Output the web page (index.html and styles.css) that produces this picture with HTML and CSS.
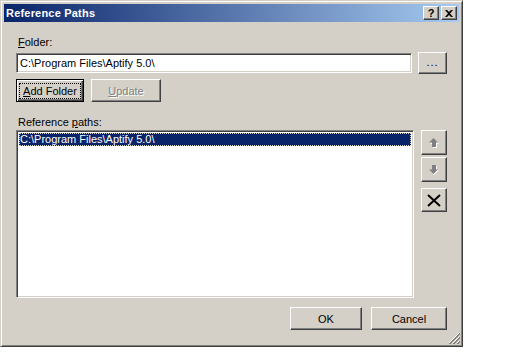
FILE: index.html
```html
<!DOCTYPE html>
<html lang="en">
<head>
    <meta charset="utf-8">
    <title>Reference Paths</title>
    <link rel="stylesheet" href="styles.css">
</head>
<body>
    <div class="dialog">
        <div class="titlebar">
            <span class="title">Reference Paths</span>
            <div class="title-buttons">
                <button class="cap-btn">?</button>
                <button class="cap-btn">
                    <svg width="8" height="7" viewBox="0 0 8 7"><path d="M0 0h2l2 2 2-2h2L5 3.5 8 7H6L4 5 2 7H0l3-3.5z" fill="#000"/></svg>
                </button>
            </div>
        </div>

        <div class="content">
            <div class="label"><u>F</u>older:</div>
            <div class="folder-row">
                <div class="textbox">C:\Program Files\Aptify 5.0\</div>
                <button class="btn browse-btn">...</button>
            </div>

            <div class="action-row">
                <button class="btn default-btn"><span class="focus"><u>A</u>dd Folder</span></button>
                <button class="btn disabled-btn"><u>U</u>pdate</button>
            </div>

            <div class="label paths-label">Reference <u>p</u>aths:</div>
            <div class="list-row">
                <div class="listbox">
                    <div class="list-item selected">C:\Program Files\Aptify 5.0\</div>
                </div>
                <div class="side-buttons">
                    <button class="btn side-btn">
                        <svg width="10" height="10" viewBox="0 0 10 10">
                            <path d="M5 1l5 5H8v4H4V6H1z" fill="#fff"/>
                            <path d="M4.5 0l4.5 4.5H7V9H3V4.5H0z" fill="#808080"/>
                        </svg>
                    </button>
                    <button class="btn side-btn">
                        <svg width="10" height="10" viewBox="0 0 10 10">
                            <path d="M5 10l5-5H8V1H4v4H1z" fill="#fff"/>
                            <path d="M4.5 9L9 4.5H7V0H3v4.5H0z" fill="#808080"/>
                        </svg>
                    </button>
                    <button class="btn side-btn delete-btn">
                        <svg width="14" height="13" viewBox="0 0 14 13">
                            <path d="M1 1l12 11M13 1L1 12" stroke="#000" stroke-width="2"/>
                        </svg>
                    </button>
                </div>
            </div>

            <div class="footer-row">
                <button class="btn ok-btn">OK</button>
                <button class="btn cancel-btn">Cancel</button>
            </div>
        </div>

        <svg class="grip" width="12" height="12" viewBox="0 0 12 12">
            <path d="M11 1L1 11M11 5L5 11M11 9L9 11" stroke="#fff" stroke-width="1"/>
            <path d="M12 1L1 12M12 2L2 12M12 5L5 12M12 6L6 12M12 9L9 12M12 10L10 12" stroke="#808080" stroke-width="1"/>
        </svg>
    </div>
</body>
</html>
```

FILE: styles.css
```css
body {
    margin: 0;
    background: #fff;
    font-family: "Liberation Sans", Arial, sans-serif;
    font-size: 11px;
    color: #000;
}

/* window frame */
.dialog {
    position: relative;
    width: 463px;
    height: 347px;
    box-sizing: border-box;
    background: #d4d0c8;
    border: 1px solid;
    border-color: #d4d0c8 #404040 #404040 #d4d0c8;
    box-shadow: inset 1px 1px #fff, inset -1px -1px #808080;
    padding: 3px;
}

.titlebar {
    height: 18px;
    display: flex;
    align-items: center;
    justify-content: space-between;
    background: linear-gradient(to right, #0a246a, #a6caf0);
    padding: 0 2px 0 2px;
}
.title {
    color: #fff;
    font-weight: bold;
    font-size: 11px;
    letter-spacing: 0.2px;
}
.title-buttons {
    display: flex;
    gap: 2px;
}
.cap-btn {
    width: 16px;
    height: 14px;
    padding: 0;
    display: flex;
    align-items: center;
    justify-content: center;
    background: #d4d0c8;
    border: 1px solid;
    border-color: #fff #404040 #404040 #fff;
    box-shadow: inset -1px -1px #808080, inset 1px 1px #d4d0c8;
    font-family: "Liberation Sans", Arial, sans-serif;
    font-weight: bold;
    font-size: 11px;
    line-height: 1;
}

.content {
    display: flex;
    flex-direction: column;
    padding: 14px 12px 0 12px;
}

.label {
    height: 13px;
    line-height: 13px;
    padding-left: 2px;
    margin-bottom: 4px;
}

/* generic raised button */
.btn {
    box-sizing: border-box;
    background: #d4d0c8;
    border: 1px solid;
    border-color: #fff #404040 #404040 #fff;
    box-shadow: inset -1px -1px #808080, inset 1px 1px #d4d0c8;
    font-family: "Liberation Sans", Arial, sans-serif;
    font-size: 11px;
    color: #000;
    padding: 0;
    display: flex;
    align-items: center;
    justify-content: center;
}

.folder-row {
    display: flex;
    align-items: center;
    gap: 6px;
    height: 20px;
}
.textbox {
    flex: 1;
    height: 20px;
    box-sizing: border-box;
    background: #fff;
    border: 1px solid;
    border-color: #808080 #fff #fff #808080;
    box-shadow: inset 1px 1px #404040, inset -1px -1px #d4d0c8;
    padding: 0 3px;
    line-height: 18px;
    white-space: nowrap;
}
.browse-btn {
    width: 29px;
    height: 22px;
    letter-spacing: 1px;
    padding-bottom: 2px;
}

.action-row {
    display: flex;
    gap: 7px;
    margin-top: 6px;
    height: 23px;
}
.default-btn {
    width: 68px;
    height: 23px;
    border: 1px solid #000;
    box-shadow: inset 1px 1px #fff, inset -1px -1px #404040, inset -2px -2px #808080;
}
.focus {
    border: 1px dotted #000;
    padding: 1px 3px;
    line-height: 12px;
}
.disabled-btn {
    width: 70px;
    height: 23px;
    color: #808080;
    text-shadow: 1px 1px #fff;
}

.paths-label {
    margin-top: 14px;
    margin-bottom: 1px;
}

.list-row {
    display: flex;
    gap: 7px;
    height: 168px;
}
.listbox {
    flex: 1;
    box-sizing: border-box;
    background: #fff;
    border: 1px solid;
    border-color: #808080 #fff #fff #808080;
    box-shadow: inset 1px 1px #404040, inset -1px -1px #d4d0c8;
    padding: 2px 2px;
}
.list-item {
    height: 13px;
    line-height: 13px;
    padding: 0 1px;
}
.list-item.selected {
    background: #0a246a;
    color: #fff;
    outline: 1px dotted #d4d0c8;
    outline-offset: -1px;
}

.side-buttons {
    display: flex;
    flex-direction: column;
    width: 26px;
}
.side-btn {
    width: 26px;
    height: 25px;
    margin-bottom: 2px;
}
.delete-btn {
    height: 24px;
    margin-top: 4px;
}

.footer-row {
    display: flex;
    justify-content: flex-end;
    gap: 9px;
    margin-top: 9px;
}
.ok-btn {
    width: 72px;
    height: 23px;
}
.cancel-btn {
    width: 76px;
    height: 23px;
}

/* size grip sits in the frame corner */
.grip {
    position: absolute;
    right: 2px;
    bottom: 2px;
}
```
